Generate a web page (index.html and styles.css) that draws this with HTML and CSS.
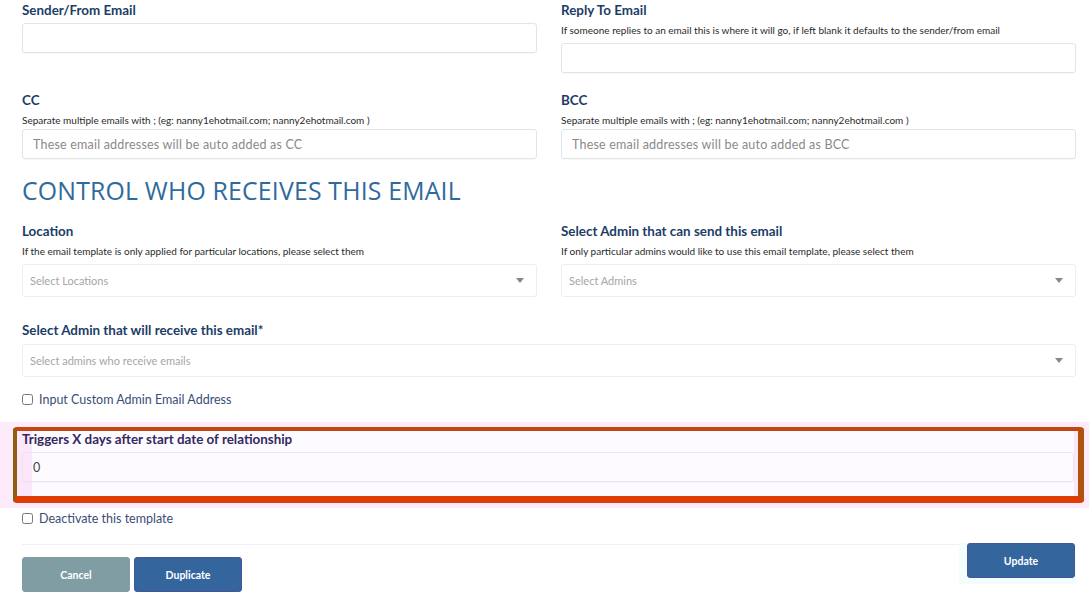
FILE: index.html
```html
<!DOCTYPE html>
<html>
<head>
<meta charset="utf-8">
<link rel="stylesheet" href="styles.css">
</head>
<body>
<div class="page">
  <div class="grid row-top">
    <div class="field">
      <div class="label">Sender/From Email</div>
      <input class="input" type="text">
    </div>
    <div class="field">
      <div class="label">Reply To Email</div>
      <div class="help help-wide">If someone replies to an email this is where it will go, if left blank it defaults to the sender/from email</div>
      <input class="input" type="text">
    </div>
  </div>
  <div class="grid row-cc">
    <div class="field">
      <div class="label">CC</div>
      <div class="help">Separate multiple emails with ; (eg: nanny1ehotmail.com; nanny2ehotmail.com )</div>
      <input class="input" type="text" placeholder="These email addresses will be auto added as CC">
    </div>
    <div class="field">
      <div class="label">BCC</div>
      <div class="help">Separate multiple emails with ; (eg: nanny1ehotmail.com; nanny2ehotmail.com )</div>
      <input class="input" type="text" placeholder="These email addresses will be auto added as BCC">
    </div>
  </div>
  <h2 class="heading">CONTROL WHO RECEIVES THIS EMAIL</h2>
  <div class="grid row-loc">
    <div class="field">
      <div class="label">Location</div>
      <div class="help">If the email template is only applied for particular locations, please select them</div>
      <div class="select"><span>Select Locations</span><span class="caret"></span></div>
    </div>
    <div class="field">
      <div class="label">Select Admin that can send this email</div>
      <div class="help">If only particular admins would like to use this email template, please select them</div>
      <div class="select"><span>Select Admins</span><span class="caret"></span></div>
    </div>
  </div>
  <div class="field row-recv">
    <div class="label">Select Admin that will receive this email*</div>
    <div class="select select-recv"><span>Select admins who receive emails</span><span class="caret"></span></div>
  </div>
  <label class="check row-custom"><input type="checkbox"><span>Input Custom Admin Email Address</span></label>
  <div class="band">
    <div class="hl">
      <div class="label hl-label">Triggers X days after start date of relationship</div>
      <input class="input hl-input" type="text" value="0">
    </div>
  </div>
  <label class="check row-deact"><input type="checkbox"><span>Deactivate this template</span></label>
  <div class="footer">
    <div class="footer-left">
      <button class="btn btn-cancel">Cancel</button>
      <button class="btn btn-primary">Duplicate</button>
    </div>
    <div class="footer-right">
      <button class="btn btn-primary">Update</button>
    </div>
  </div>
</div>
</body>
</html>
```

FILE: styles.css
```css
html, body {
  margin: 0;
  padding: 0;
  background: #ffffff;
}
body {
  font-family: "Lato", "Noto Sans", sans-serif;
  color: #333;
  width: 1089px;
  height: 600px;
  overflow: hidden;
}
.page {
  padding: 0 13px 0 22px;
}
.grid {
  display: grid;
  grid-template-columns: 1fr 1fr;
  column-gap: 24px;
  align-items: start;
}
.field {
  display: flex;
  flex-direction: column;
}
.label {
  font-size: 13.4px;
  font-weight: 700;
  line-height: 20px;
  color: #1c3d68;
}
.help {
  font-size: 10px;
  line-height: 14px;
  margin-top: 3px;
  margin-bottom: 1px;
  color: #2a2a2a;
}
.help-wide {
  margin-bottom: 5px;
}
.input {
  box-sizing: border-box;
  height: 30px;
  width: 100%;
  margin: 3px 0 0;
  border: 1px solid #e1e5e8;
  border-radius: 3px;
  padding: 0 10px;
  font-family: inherit;
  font-size: 12.5px;
  color: #444;
  background: #fff;
  box-shadow: 0 1px 1px rgba(0,0,0,0.03);
}
.help + .input {
  margin-top: 1px;
}
.input::placeholder {
  color: #8a8a8a;
  letter-spacing: 0.2px;
}
.row-cc {
  margin-top: 17px;
}
.heading {
  margin: 16px 0 0;
  font-family: "Open Sans", "Lato", sans-serif;
  font-weight: 400;
  font-size: 24.8px;
  line-height: 30px;
  color: #2f6a9d;
  letter-spacing: 0.2px;
}
.row-loc {
  margin-top: 16px;
}
.select {
  box-sizing: border-box;
  height: 33px;
  border: 1px solid #eceff1;
  border-radius: 3px;
  padding: 0 12px 0 7px;
  display: flex;
  align-items: center;
  justify-content: space-between;
  font-size: 11px;
  color: #a6a6a6;
  background: #fff;
  margin-top: 5px;
}
.caret {
  width: 0;
  height: 0;
  border-left: 4px solid transparent;
  border-right: 4px solid transparent;
  border-top: 5px solid #888;
}
.row-recv {
  margin-top: 23px;
}
.select-recv {
  margin-top: 4px;
}
.check {
  display: flex;
  align-items: center;
  font-size: 12.5px;
  line-height: 16px;
  color: #3b4d78;
}
.check input {
  margin: 0 6px 0 0;
  width: 11px;
  height: 11px;
  position: relative;
  top: -1px;
}
.row-custom {
  margin-top: 15px;
}
.band {
  margin: 14px -13px 0 -22px;
  padding: 5px 5px 5px 13px;
  background: #fdebfb;
}
.hl {
  border-style: solid;
  border-width: 4px 6px 7px 4px;
  border-color: #c3480f #b0540d #e03c05 #8b5e12;
  border-radius: 4px;
  padding: 0 4px 14px 5px;
  background: linear-gradient(to right, #fce6fa 0, #fce6fa 15px, #fdfbff 15px, #fdfbff calc(100% - 4px), #fce6fa calc(100% - 4px));
}
.hl-label {
  line-height: 16px;
  color: #33295f;
}
.hl-input {
  margin-top: 5px;
  background: transparent;
  border-color: #e8e8ec;
  padding-left: 10px;
}
.row-deact {
  margin-top: 3px;
}
.footer {
  display: flex;
  align-items: flex-start;
  margin-top: 17px;
}
.footer-left {
  flex: 1;
  display: flex;
  gap: 4px;
  border-top: 1px solid #eef0f4;
  padding-top: 12px;
}
.footer-right {
  margin-top: -1px;
  background: #f2fdfe;
  padding: 0 1px 6px 8px;
}
.btn {
  width: 108px;
  height: 35px;
  border: 1px solid #3e5d98;
  border-radius: 3px;
  font-family: inherit;
  font-size: 10.5px;
  font-weight: 700;
  color: #fff;
  cursor: pointer;
}
.btn-cancel {
  background: #7f9da2;
  border-color: #7f9da2;
}
.btn-primary {
  background: #35659d;
  border-color: #46549a;
}
```
